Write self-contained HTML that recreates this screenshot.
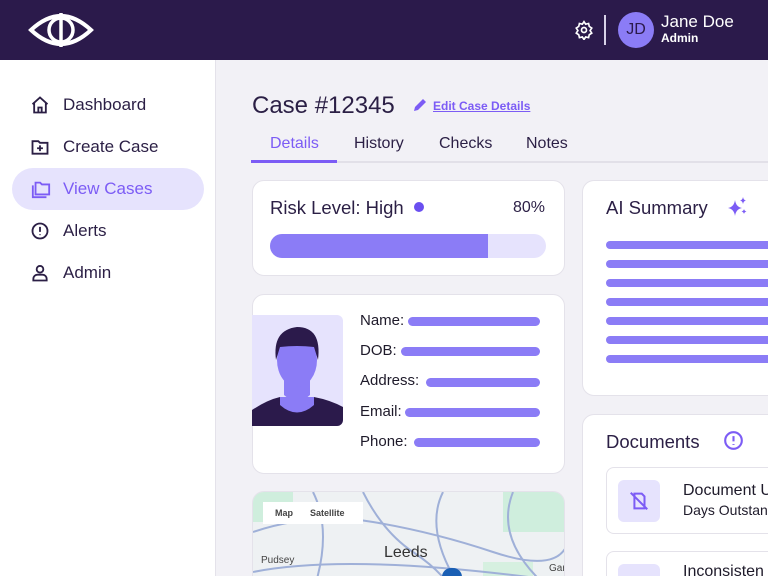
<!DOCTYPE html>
<html><head><meta charset="utf-8"><style>
*{box-sizing:border-box;margin:0;padding:0}
html,body{width:768px;height:576px;overflow:hidden}
body{background:#f2f1f6;font-family:"Liberation Sans",sans-serif;color:#2b1f45;white-space:nowrap}
#w{position:relative;width:768px;height:576px;overflow:hidden}
.abs{position:absolute}
.hdr{left:0;top:0;width:768px;height:60px;background:#2b1a4b}
.side{left:0;top:60px;width:216px;height:516px;background:#fff;border-right:1px solid #e4e2ea}
.nav{left:12px;width:192px;height:42px;border-radius:21px;display:flex;align-items:center;font-size:17px;color:#2b1f45}
.nav svg{position:absolute;left:18px}
.nav span{position:absolute;left:51px}
.card{background:#fff;border:1px solid #e4e2ea;border-radius:12px}
.lbl{left:360px;font-size:15px;color:#1e1a2a}
.bar{height:9px;border-radius:5px;background:#8b7cf6}
.ln{left:606px;width:162px;height:8px;border-radius:4px 0 0 4px;background:#8b7cf6}
</style></head><body><div id="w">
<div class="abs hdr"></div>
<svg class="abs" style="left:28px;top:10px" width="66" height="40" viewBox="0 0 66 40"><path d="M3 20 Q33 -8 63 20 Q33 48 3 20Z" fill="none" stroke="#fff" stroke-width="4"/><circle cx="33" cy="20" r="12" fill="none" stroke="#fff" stroke-width="3.5"/><line x1="33" y1="3" x2="33" y2="37" stroke="#fff" stroke-width="3.5"/></svg>
<svg class="abs" style="left:574px;top:20px" width="20" height="20" viewBox="0 0 24 24" fill="none" stroke="#fff" stroke-width="2"><circle cx="12" cy="12" r="3"/><path d="M12 2l2 3 3.5-.8.8 3.5 3 2-2 3 2 3-3 2-.8 3.5-3.5-.8-2 3-2-3-3.5.8-.8-3.5-3-2 2-3-2-3 3-2 .8-3.5 3.5.8z"/></svg>
<div class="abs" style="left:604px;top:15px;width:2px;height:30px;background:#d8d2e8"></div>
<div class="abs" style="left:618px;top:12px;width:36px;height:36px;border-radius:50%;background:#8b7cf6;color:#2b1a4b;font-size:16px;display:flex;align-items:center;justify-content:center">JD</div>
<div class="abs" style="left:661px;top:12px;color:#fff;font-size:17px">Jane Doe</div>
<div class="abs" style="left:661px;top:31px;color:#fff;font-size:12px;font-weight:bold">Admin</div>

<div class="abs side"></div>
<div class="abs nav" style="top:84px"><svg width="20" height="20" viewBox="0 0 24 24" fill="none" stroke="#2b1f45" stroke-width="2.2"><path d="M3 11L12 3l9 8M5 9v12h14V9M10 21v-6h4v6"/></svg><span>Dashboard</span></div>
<div class="abs nav" style="top:126px"><svg width="20" height="20" viewBox="0 0 24 24" fill="none" stroke="#2b1f45" stroke-width="2.2"><path d="M3 5h7l2 2h9v13H3z"/><path d="M12 10v7M8.5 13.5h7"/></svg><span>Create Case</span></div>
<div class="abs nav" style="top:168px;background:#e6e3fd;color:#7c5cf5"><svg width="22" height="20" viewBox="0 0 24 22" fill="none" stroke="#7c5cf5" stroke-width="2"><path d="M6 4h5l2 2h8v11H6z"/><path d="M3 7v13h15"/></svg><span>View Cases</span></div>
<div class="abs nav" style="top:210px"><svg width="20" height="20" viewBox="0 0 24 24" fill="none" stroke="#2b1f45" stroke-width="2.2"><circle cx="12" cy="12" r="9"/><path d="M12 7v6M12 16v1"/></svg><span>Alerts</span></div>
<div class="abs nav" style="top:252px"><svg width="20" height="20" viewBox="0 0 24 24" fill="none" stroke="#2b1f45" stroke-width="2.2"><circle cx="12" cy="7.5" r="4"/><path d="M4 21v-2a5 5 0 0 1 5-5h6a5 5 0 0 1 5 5v2z"/></svg><span>Admin</span></div>

<div class="abs" style="left:252px;top:92px;font-size:24px;color:#2b1f45">Case #12345</div>
<svg class="abs" style="left:412px;top:97px" width="16" height="16" viewBox="0 0 16 16"><path d="M2 14l1-4 8-8 3 3-8 8z" fill="#7c5cf5"/></svg>
<div class="abs" style="left:433px;top:99px;font-size:12px;color:#7c5cf5;font-weight:bold;text-decoration:underline">Edit Case Details</div>
<div class="abs" style="left:252px;top:161px;width:516px;height:2px;background:#e2e0e8"></div>
<div class="abs" style="left:251px;top:160px;width:86px;height:3px;background:#7c5cf5"></div>
<div class="abs" style="left:270px;top:135px;font-size:16px;color:#7c5cf5">Details</div>
<div class="abs" style="left:354px;top:135px;font-size:16px">History</div>
<div class="abs" style="left:439px;top:135px;font-size:16px">Checks</div>
<div class="abs" style="left:526px;top:135px;font-size:16px">Notes</div>

<div class="abs card" style="left:252px;top:180px;width:313px;height:96px"></div>
<div class="abs" style="left:270px;top:197px;font-size:18.5px">Risk Level: High</div>
<div class="abs" style="left:414px;top:202px;width:10px;height:10px;border-radius:50%;background:#6a4ff0"></div>
<div class="abs" style="left:513px;top:199px;font-size:16px">80%</div>
<div class="abs" style="left:270px;top:234px;width:276px;height:24px;border-radius:12px;background:#e6e3fd;overflow:hidden"><div style="width:218px;height:24px;background:#8b7cf6"></div></div>

<div class="abs card" style="left:252px;top:294px;width:313px;height:180px"></div>
<div class="abs" style="left:252px;top:315px;width:91px;height:111px;background:#e6e3fd;border-radius:0 6px 6px 0;overflow:hidden">
<svg width="91" height="111" viewBox="0 0 91 111"><path d="M0 111 V95 Q15 85 28 82 L62 82 Q78 85 91 92 V111Z" fill="#2b1a4b"/><path d="M32 60 L32 80 Q45 92 58 80 L58 60Z" fill="#8b7cf6"/><ellipse cx="45" cy="45" rx="20" ry="27" fill="#8b7cf6"/><path d="M24 45 Q20 15 45 12 Q70 12 66 45 L62 32 Q45 30 28 32Z" fill="#2b1a4b"/><path d="M28 90 Q45 105 62 90 L62 82 L28 82Z" fill="#8b7cf6"/></svg></div>
<div class="abs lbl" style="top:312px">Name:</div><div class="abs bar" style="left:408px;top:317px;width:132px"></div>
<div class="abs lbl" style="top:342px">DOB:</div><div class="abs bar" style="left:401px;top:347px;width:139px"></div>
<div class="abs lbl" style="top:372px">Address:</div><div class="abs bar" style="left:426px;top:378px;width:114px"></div>
<div class="abs lbl" style="top:403px">Email:</div><div class="abs bar" style="left:405px;top:408px;width:135px"></div>
<div class="abs lbl" style="top:433px">Phone:</div><div class="abs bar" style="left:414px;top:438px;width:126px"></div>

<div class="abs card" style="left:252px;top:491px;width:313px;height:85px;background:#eef1f3;overflow:hidden;border-radius:12px 12px 0 0;border-bottom:none">
<svg width="313" height="85" viewBox="0 0 313 85" style="position:absolute;left:0;top:0"><rect x="0" y="0" width="40" height="30" fill="#cfeedd"/><rect x="250" y="0" width="63" height="40" fill="#cfeedd"/><rect x="230" y="70" width="50" height="15" fill="#d6f0e0"/><g fill="none" stroke="#9fb0d8" stroke-width="2"><path d="M0 40 Q60 20 120 30 T240 60 313 55"/><path d="M110 0 Q130 40 160 60 T200 100"/><path d="M60 0 Q80 40 60 100"/><path d="M190 0 Q170 40 210 100"/><path d="M0 80 Q100 60 313 90"/><path d="M260 0 Q240 50 300 100"/></g></svg>
<div class="abs" style="left:10px;top:10px;width:100px;height:22px;background:#fff;font-size:9px;font-weight:bold;color:#444"><span style="position:absolute;left:12px;top:6px">Map</span><span style="position:absolute;left:47px;top:6px">Satellite</span></div>
<div class="abs" style="left:131px;top:52px;font-size:16px;color:#333">Leeds</div>
<div class="abs" style="left:8px;top:63px;font-size:10px;color:#444">Pudsey</div>
<div class="abs" style="left:296px;top:71px;font-size:10px;color:#444">Gar</div>
<div class="abs" style="left:189px;top:76px;width:20px;height:9px;border-radius:10px 10px 0 0;background:#1a5fb4"></div>
</div>

<div class="abs card" style="left:582px;top:180px;width:186px;height:216px;border-radius:12px 0 0 12px;border-right:none"></div>
<div class="abs" style="left:606px;top:197px;font-size:18.5px">AI Summary</div>
<svg class="abs" style="left:727px;top:196px" width="22" height="22" viewBox="0 0 22 22" fill="#7c5cf5"><path d="M8 4 Q9 11 15 12 Q9 13 8 20 Q7 13 1 12 Q7 11 8 4Z"/><path d="M16 1 Q16.5 4 19 4.5 Q16.5 5 16 8 Q15.5 5 13 4.5 Q15.5 4 16 1Z"/><path d="M17 13 Q17.4 15 19.5 15.5 Q17.4 16 17 18 Q16.6 16 14.5 15.5 Q16.6 15 17 13Z"/></svg>
<div class="abs ln" style="top:241px"></div><div class="abs ln" style="top:260px"></div><div class="abs ln" style="top:279px"></div><div class="abs ln" style="top:298px"></div><div class="abs ln" style="top:317px"></div><div class="abs ln" style="top:336px"></div><div class="abs ln" style="top:355px"></div>

<div class="abs card" style="left:582px;top:414px;width:186px;height:162px;border-radius:12px 0 0 0;border-right:none;border-bottom:none"></div>
<div class="abs" style="left:606px;top:431px;font-size:18.5px">Documents</div>
<svg class="abs" style="left:723px;top:430px" width="21" height="21" viewBox="0 0 24 24" fill="none" stroke="#7c5cf5" stroke-width="2.4"><circle cx="12" cy="12" r="9.5"/><path d="M12 7v6M12 16v1"/></svg>
<div class="abs" style="left:606px;top:467px;width:162px;height:67px;border:1px solid #e4e2ea;border-right:none;border-radius:8px 0 0 8px;background:#fff"></div>
<div class="abs" style="left:618px;top:480px;width:42px;height:42px;border-radius:6px;background:#e6e3fd"></div>
<svg class="abs" style="left:628px;top:490px" width="22" height="22" viewBox="0 0 24 24" fill="none" stroke="#7c5cf5" stroke-width="2.2"><path d="M7 4h8l3 3v13H7z"/><path d="M3 3l18 18"/></svg>
<div class="abs" style="left:683px;top:482px;width:85px;overflow:hidden;font-size:16px;color:#1e1a2a">Document U</div>
<div class="abs" style="left:683px;top:502px;width:85px;overflow:hidden;font-size:14px;color:#1e1a2a">Days Outstan</div>
<div class="abs" style="left:606px;top:551px;width:162px;height:25px;border:1px solid #e4e2ea;border-right:none;border-bottom:none;border-radius:8px 0 0 0;background:#fff"></div>
<div class="abs" style="left:618px;top:564px;width:42px;height:12px;border-radius:6px 6px 0 0;background:#e6e3fd"></div>
<div class="abs" style="left:683px;top:563px;width:85px;height:13px;overflow:hidden;font-size:16px;color:#1e1a2a">Inconsisten</div>
</div></body></html>
